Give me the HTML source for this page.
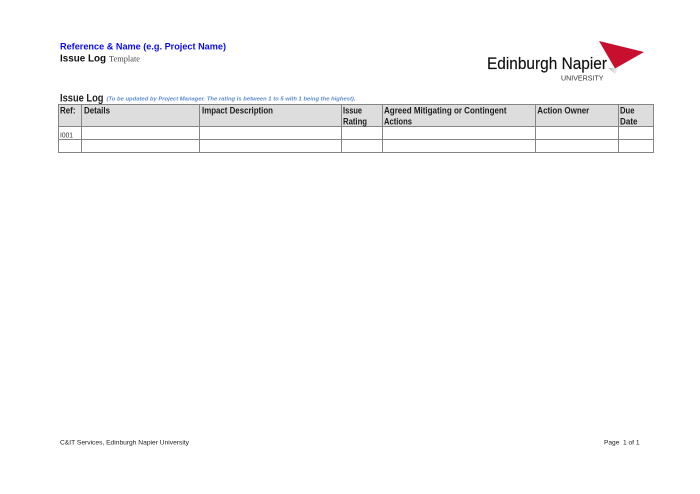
<!DOCTYPE html>
<html>
<head>
<meta charset="utf-8">
<style>
html,body{margin:0;padding:0;background:#fff;}
#p{position:relative;width:700px;height:494px;overflow:hidden;background:#fff;}
svg{position:absolute;left:0;top:0;filter:blur(0.35px);}
text{font-family:"Liberation Sans",sans-serif;}
.h{font-size:9.2px;font-weight:bold;fill:#1c1c1c;}
.f{font-size:6.8px;fill:#222;}
</style>
</head>
<body>
<div id="p">
<svg width="700" height="494" viewBox="0 0 700 494">
<defs><linearGradient id="s" x1="0" y1="0" x2="1" y2="0"><stop offset="0" stop-color="#888"/><stop offset="1" stop-color="#fff"/></linearGradient></defs>

<text x="60" y="49.5" font-size="9.6" font-weight="bold" fill="#0b0bf0" textLength="166" lengthAdjust="spacingAndGlyphs">Reference &amp; Name (e.g. Project Name)</text>
<text x="60" y="61.3" font-size="10.4" font-weight="bold" fill="#111" textLength="46" lengthAdjust="spacingAndGlyphs">Issue Log</text>
<text x="109" y="61.3" font-size="8.6" fill="#444" style="font-family:'Liberation Serif',serif" textLength="31" lengthAdjust="spacingAndGlyphs">Template</text>

<path d="M608 68 L619 68 L615 74 Z" fill="url(#s)" opacity=".6"/>
<path d="M599 41 L644 52 L615 68.5 Z" fill="#c8102e"/>
<text x="487" y="69" font-size="17" fill="#111" stroke="#111" stroke-width=".15" textLength="120" lengthAdjust="spacingAndGlyphs">Edinburgh Napier</text>
<text x="561" y="80.5" font-size="7.6" fill="#333" textLength="42.5" lengthAdjust="spacingAndGlyphs">UNIVERSITY</text>

<text x="60" y="101.5" font-size="11.4" font-weight="bold" fill="#222" textLength="43.5" lengthAdjust="spacingAndGlyphs">Issue Log</text>
<text x="106.5" y="100.7" font-size="5.8" font-weight="bold" font-style="italic" fill="#5b8ad0" textLength="249" lengthAdjust="spacingAndGlyphs">(To be updated by Project Manager. The rating is between 1 to 5 with 1 being the highest).</text>

<rect x="58" y="104" width="596" height="23" fill="#dddddd"/>
<g fill="#858585">
<rect x="58" y="104" width="596" height="1"/>
<rect x="58" y="126" width="596" height="1"/>
<rect x="58" y="139" width="596" height="1"/>
<rect x="58" y="152" width="596" height="1"/>
<rect x="58" y="104" width="1" height="49"/>
<rect x="81" y="104" width="1" height="49"/>
<rect x="199" y="104" width="1" height="49"/>
<rect x="341" y="104" width="1" height="49"/>
<rect x="382" y="104" width="1" height="49"/>
<rect x="535" y="104" width="1" height="49"/>
<rect x="618" y="104" width="1" height="49"/>
<rect x="653" y="104" width="1" height="49"/>
</g>

<text class="h" x="60" y="113.5" textLength="15.5" lengthAdjust="spacingAndGlyphs">Ref:</text>
<text class="h" x="84" y="113.5" textLength="26" lengthAdjust="spacingAndGlyphs">Details</text>
<text class="h" x="202" y="113.5" textLength="71" lengthAdjust="spacingAndGlyphs">Impact Description</text>
<text class="h" x="343" y="113.5" textLength="19" lengthAdjust="spacingAndGlyphs">Issue</text>
<text class="h" x="343" y="124.7" textLength="24" lengthAdjust="spacingAndGlyphs">Rating</text>
<text class="h" x="384" y="113.5" textLength="122.5" lengthAdjust="spacingAndGlyphs">Agreed Mitigating or Contingent</text>
<text class="h" x="384" y="124.7" textLength="28" lengthAdjust="spacingAndGlyphs">Actions</text>
<text class="h" x="537.3" y="113.5" textLength="52" lengthAdjust="spacingAndGlyphs">Action Owner</text>
<text class="h" x="620" y="113.5" textLength="14.5" lengthAdjust="spacingAndGlyphs">Due</text>
<text class="h" x="620" y="124.7" textLength="17.5" lengthAdjust="spacingAndGlyphs">Date</text>
<text x="60" y="137.5" font-size="7.4" fill="#333" textLength="13" lengthAdjust="spacingAndGlyphs">I001</text>

<text class="f" x="60" y="444.5" textLength="129" lengthAdjust="spacingAndGlyphs">C&amp;IT Services, Edinburgh Napier University</text>
<text class="f" x="604" y="444.5" textLength="35.5" lengthAdjust="spacingAndGlyphs">Page&#160;&#160;1 of 1</text>
</svg>
</div>
</body>
</html>
